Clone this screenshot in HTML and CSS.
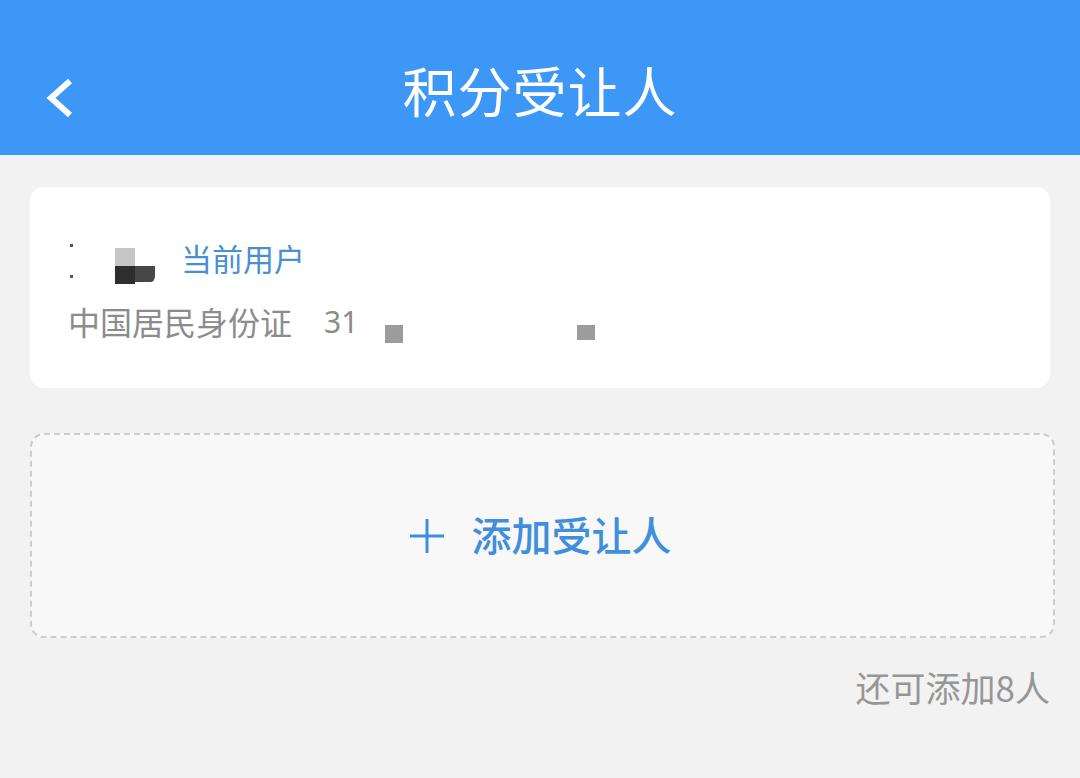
FILE: index.html
```html
<!DOCTYPE html>
<html>

<head>
    <meta charset="utf-8" />
    <title>积分受让人</title>
    <link rel="stylesheet" href="styles.css">
</head>

<body>
    <div class="header">
        <a class="back">
            <svg width="36" height="40" viewBox="0 0 36 40">
                <path d="M28 3 L9 20 L28 37" fill="none" stroke="#fff" stroke-width="6" stroke-linejoin="miter" />
            </svg>
        </a>
        <h1 class="title">积分受让人</h1>
    </div>
    <div class="header-line"></div>

    <div class="main">
        <div class="card">
            <div class="name-row">
                <span class="dots"><i></i><i></i></span>
                <span class="mosaic">
                    <i class="m1"></i><i class="m2"></i><i class="m3"></i><i class="m4"></i>
                </span>
                <span class="tag">当前用户</span>
            </div>
            <div class="id-row">
                <span class="id-type">中国居民身份证</span>
                <span class="id-num">31</span>
                <i class="blur blur-a"></i>
                <i class="blur blur-b"></i>
            </div>
        </div>

        <div class="add-box">
            <svg class="plus" width="34" height="34" viewBox="0 0 34 34">
                <path d="M17 0 V34 M0 17 H34" stroke="#3f8fdc" stroke-width="3" />
            </svg>
            <span class="add-text">添加受让人</span>
        </div>

        <p class="note">还可添加8人</p>
    </div>
</body>

</html>
```

FILE: styles.css
```css
body,
h1,
p {
    margin: 0;
    padding: 0;
}

body {
    width: 1080px;
    height: 778px;
    overflow: hidden;
    background: #f2f2f2;
    font-family: "Noto Sans CJK SC", "Noto Sans", sans-serif;
}

.header {
    position: relative;
    height: 155px;
    background: #3c97f7;
    display: flex;
    align-items: center;
    justify-content: center;
}

.header-line {
    height: 1px;
    background: #e4f3fb;
}

.header .back {
    position: absolute;
    left: 42px;
    top: 78px;
    width: 36px;
    height: 40px;
}

.header .title {
    margin-top: 24px;
    color: #fff;
    font-size: 54px;
    font-weight: 400;
    line-height: 64px;
    letter-spacing: 1px;
}

.main {
    padding: 31px 25px 0 30px;
}

.card {
    width: 1020px;
    height: 201px;
    box-sizing: border-box;
    padding: 51px 0 0 38px;
    background: #fff;
    border-radius: 14px;
}

.name-row {
    display: flex;
    align-items: center;
    height: 40px;
}

.dots {
    display: flex;
    flex-direction: column;
    justify-content: space-between;
    width: 4px;
    height: 34px;
    margin: 6px 0 0 2px;
}

.dots i {
    display: block;
    width: 3px;
    height: 3px;
    background: #555;
}

.mosaic {
    display: grid;
    grid-template-columns: 20px 20px;
    grid-template-rows: 18px 18px;
    margin: 16px 0 0 41px;
}

.mosaic .m1 {
    background: #c6c6c6;
}

.mosaic .m3 {
    background: #2e2e2e;
}

.mosaic .m4 {
    background: #474747;
    border-bottom-right-radius: 4px 6px;
    height: 16px;
}

.tag {
    margin-left: 26px;
    color: #4a8fd1;
    font-size: 31px;
    line-height: 40px;
}

.id-row {
    display: flex;
    align-items: center;
    height: 40px;
    margin-top: 23px;
    color: #8c8c8c;
    font-size: 32px;
}

.id-num {
    margin-left: 32px;
    font-family: "Noto Sans", sans-serif;
    font-size: 30px;
}

.blur {
    display: block;
    width: 18px;
    height: 18px;
    background: #9c9c9c;
}

.blur-a {
    margin: 26px 0 0 27px;
}

.blur-b {
    height: 15px;
    margin: 23px 0 0 174px;
}

.add-box {
    display: flex;
    align-items: center;
    justify-content: center;
    width: 1025px;
    height: 205px;
    box-sizing: border-box;
    margin-top: 45px;
    background: #f8f8f8;
    border: 2px dashed #cdcdcd;
    border-radius: 14px;
}

.add-box .plus {
    margin: 0 28px 0 0;
}

.add-text {
    color: #3f8fdc;
    font-size: 40px;
    font-weight: 500;
    line-height: 50px;
    margin: -4px 4px 0 0;
}

.note {
    margin-top: 27px;
    padding-right: 5px;
    text-align: right;
    color: #969696;
    font-size: 35px;
    line-height: 44px;
}
```
